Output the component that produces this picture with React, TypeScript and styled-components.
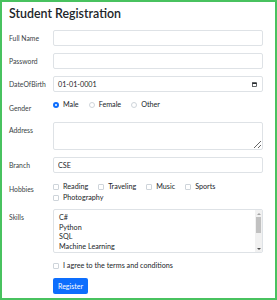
import React from 'react'
import styled, { createGlobalStyle } from 'styled-components'

const GlobalStyle = createGlobalStyle`
  body {
    margin: 0;
    font-family: Lato, "Liberation Sans", sans-serif;
    color: #212529;
    background: #fff;
  }
`

const Form = styled.form`
  width: 277px;
  box-sizing: border-box;
  border: 2px solid #48c25f;
  padding: 2px 12px 4px 7px;
`

const Title = styled.h2`
  margin: 0 0 7px 0;
  font-size: 12.4px;
  font-weight: 600;
  line-height: 19px;
  color: #212529;
`

const Row = styled.div<{ gap?: number }>`
  display: grid;
  grid-template-columns: 44px 1fr;
  align-items: start;
  margin-bottom: ${(p) => (p.gap !== undefined ? p.gap : 7)}px;
`

const Label = styled.label`
  font-size: 6.8px;
  line-height: 16px;
  color: #3a3f44;
  white-space: nowrap;
`

const TextInput = styled.input`
  box-sizing: border-box;
  width: 100%;
  height: 16px;
  margin: 0;
  padding: 0 4px;
  border: 1px solid #dee2e6;
  border-radius: 2px;
  font-family: inherit;
  font-size: 7.2px;
  color: #212529;
  outline: none;
`

const DateBox = styled.div`
  box-sizing: border-box;
  height: 16px;
  padding: 0 5px 0 4px;
  border: 1px solid #dee2e6;
  border-radius: 2px;
  display: flex;
  align-items: center;
  justify-content: space-between;
  font-size: 7.2px;
`

const TextArea = styled.textarea`
  box-sizing: border-box;
  display: block;
  width: 100%;
  height: 28px;
  margin: 0;
  padding: 2px 4px;
  border: 1px solid #dee2e6;
  border-radius: 2px;
  font-family: inherit;
  font-size: 7.2px;
  resize: vertical;
  outline: none;
`

const Choices = styled.div<{ line: number }>`
  display: flex;
  flex-wrap: wrap;
  column-gap: 10px;
  font-size: 7.2px;
  line-height: ${(p) => p.line}px;
`

const Choice = styled.span`
  display: inline-flex;
  align-items: center;
  gap: 4px;
  white-space: nowrap;
  color: #212529;
`

const Radio = styled.span<{ checked?: boolean }>`
  box-sizing: border-box;
  width: 6px;
  height: 6px;
  border-radius: 50%;
  border: ${(p) => (p.checked ? '2px solid #0d6efd' : '1px solid #ced4da')};
  background: #fff;
`

const Box = styled.span`
  box-sizing: border-box;
  width: 6px;
  height: 6px;
  border-radius: 1px;
  border: 1px solid #ced4da;
  background: #fff;
`

const SkillsBox = styled.div`
  box-sizing: border-box;
  height: 44px;
  border: 1px solid #dee2e6;
  border-radius: 2px;
  display: flex;
  overflow: hidden;
`

const SkillList = styled.ul`
  flex: 1;
  margin: 0;
  padding: 3px 5px;
  list-style: none;
  font-size: 7.2px;
  line-height: 9.7px;
`

const Scrollbar = styled.div`
  width: 7px;
  background: #f1f1f1;
  display: flex;
  flex-direction: column;
  align-items: center;
  padding: 3px 0 2px;
  box-sizing: border-box;
`

const Thumb = styled.div`
  width: 5px;
  height: 16px;
  margin: 2px 0 auto;
  background: #c1c1c1;
`

const Arrow = styled.div<{ up?: boolean }>`
  width: 0;
  height: 0;
  border-left: 2px solid transparent;
  border-right: 2px solid transparent;
  ${(p) => (p.up ? 'border-bottom: 2px solid #a3a3a3;' : 'border-top: 2px solid #505050;')}
`

const Actions = styled.div`
  display: flex;
`

const Button = styled.button`
  display: block;
  height: 16px;
  padding: 0 5px;
  border: none;
  border-radius: 2px;
  background: #0d6efd;
  color: #fff;
  font-family: inherit;
  font-size: 7px;
`

const CalendarIcon = () => (
  <svg width="5" height="5" viewBox="0 0 10 10">
    <rect x="0.8" y="1.5" width="8.4" height="7.7" fill="none" stroke="#212529" strokeWidth="1.4" />
    <rect x="0.8" y="1.5" width="8.4" height="2.4" fill="#212529" />
  </svg>
)

const hobbies = ['Reading', 'Traveling', 'Music', 'Sports', 'Photography']
const skills = ['C#', 'Python', 'SQL', 'Machine Learning']

export default function App() {
  return (
    <>
      <GlobalStyle />
      <Form onSubmit={(e) => e.preventDefault()}>
        <Title>Student Registration</Title>
        <Row>
          <Label>Full Name</Label>
          <TextInput />
        </Row>
        <Row>
          <Label>Password</Label>
          <TextInput type="password" />
        </Row>
        <Row gap={8}>
          <Label>DateOfBirth</Label>
          <DateBox>
            <span>01-01-0001</span>
            <CalendarIcon />
          </DateBox>
        </Row>
        <Row gap={6}>
          <Label>Gender</Label>
          <Choices line={9}>
            <Choice><Radio checked />Male</Choice>
            <Choice><Radio />Female</Choice>
            <Choice><Radio />Other</Choice>
          </Choices>
        </Row>
        <Row>
          <Label>Address</Label>
          <TextArea />
        </Row>
        <Row gap={8}>
          <Label>Branch</Label>
          <TextInput defaultValue="CSE" />
        </Row>
        <Row gap={6}>
          <Label>Hobbies</Label>
          <Choices line={11}>
            {hobbies.map((h) => (
              <Choice key={h}><Box />{h}</Choice>
            ))}
          </Choices>
        </Row>
        <Row gap={7}>
          <Label>Skills</Label>
          <SkillsBox>
            <SkillList>
              {skills.map((s) => (
                <li key={s}>{s}</li>
              ))}
            </SkillList>
            <Scrollbar>
              <Arrow up />
              <Thumb />
              <Arrow />
            </Scrollbar>
          </SkillsBox>
        </Row>
        <Row gap={6}>
          <span />
          <Choices line={12}>
            <Choice><Box />I agree to the terms and conditions</Choice>
          </Choices>
        </Row>
        <Row gap={0}>
          <span />
          <Actions>
            <Button type="submit">Register</Button>
          </Actions>
        </Row>
      </Form>
    </>
  )
}
